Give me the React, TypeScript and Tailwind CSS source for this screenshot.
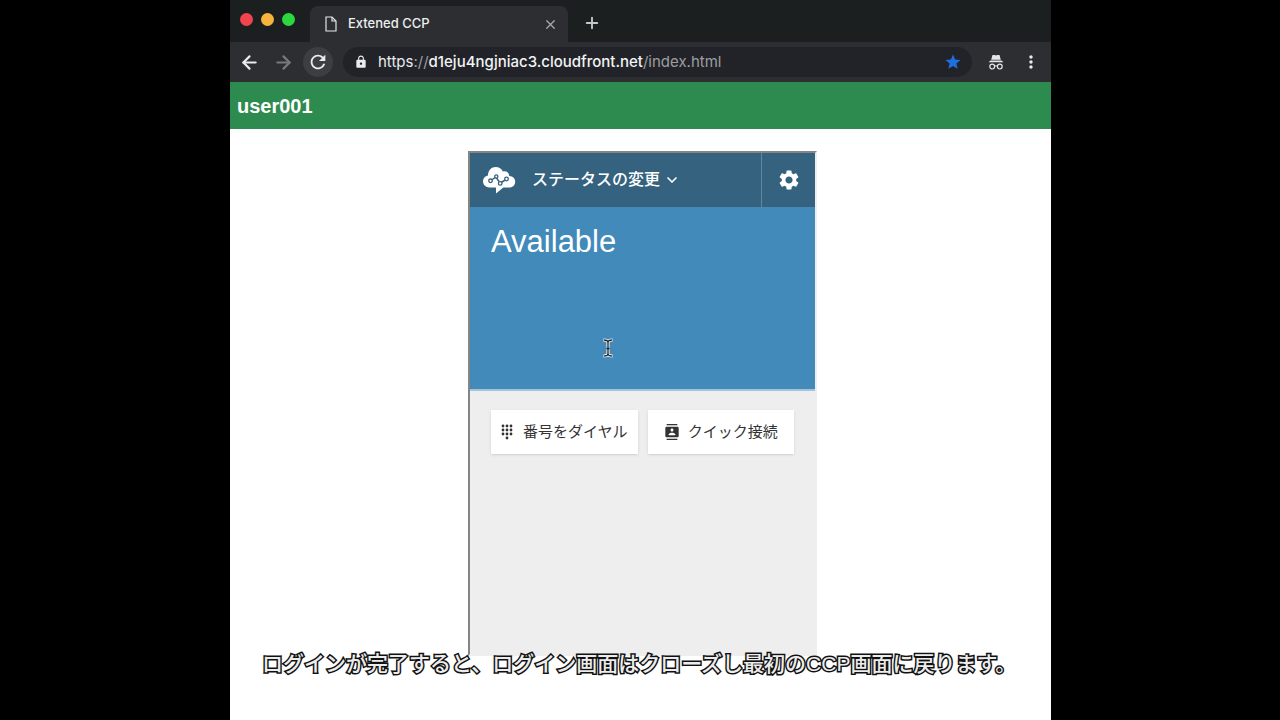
import { ArrowLeft, ArrowRight, ChevronDown, Plus, X } from 'lucide-react'
import { MdContacts, MdLock, MdMoreVert, MdRefresh, MdSettings, MdStar } from 'react-icons/md'

const windowControls = [
  { label: 'Close window', color: 'bg-[#f2444f]' },
  { label: 'Minimize window', color: 'bg-[#f6b43c]' },
  { label: 'Zoom window', color: 'bg-[#2bd840]' },
]

// three full rows of keys, then the single zero key
const dialpadDots = [
  [2, 2], [6, 2], [10, 2],
  [2, 6], [6, 6], [10, 6],
  [2, 10], [6, 10], [10, 10],
  [6, 14],
]

function FileIcon() {
  return (
    <svg viewBox="0 0 12 16" className="h-4 w-3" fill="none" stroke="#e3e5e7" strokeWidth="1.2">
      <path d="M1 1h6l4 4v10H1z" />
      <path d="M7 1v4h4" />
    </svg>
  )
}

function IncognitoIcon() {
  return (
    <svg viewBox="0 0 16 16" className="h-4 w-4" fill="#e3e5e7">
      <path d="M4.500 1h2.200l1.300.5L9.300 1h2.200l1.300 4.800H3.200zM2.500 6.500h11l2 1.800H.5z" />
      <g fill="none" stroke="#e3e5e7" strokeWidth="1.200">
        <circle cx="4.200" cy="12.600" r="2.400" />
        <circle cx="11.800" cy="12.600" r="2.400" />
        <path d="M6.600 12.200q1.400-.9 2.800 0" />
      </g>
    </svg>
  )
}

function ConnectLogo() {
  return (
    <svg viewBox="0 0 34 28" className="h-7 w-[34px]">
      <path
        fill="#fff"
        d="M7.500 21.500C3.500 21.500 1 18.600 1 15.300c0-3.100 2-5.400 4.900-5.900C6.200 4.500 9.300 1 13.700 1c3.300 0 5.900 1.700 7.100 4.500 3.500-.9 6.300 1.300 6.500 4.600 3.600.3 5.900 2.600 5.900 5.600 0 3.300-2.400 5.800-5.900 5.800h-6L14 27.500v-6z"
      />
      <path fill="none" stroke="#35627f" strokeWidth="1.500" d="M9 14.500l4.800-3.500 4.500 6.200 5.600-3.700" />
      <g fill="#fff" stroke="#35627f" strokeWidth="1.300">
        <circle cx="8.500" cy="14.800" r="1.800" />
        <circle cx="14.300" cy="10.500" r="1.600" />
        <circle cx="18.200" cy="17.400" r="1.800" />
        <circle cx="24.500" cy="13" r="1.800" />
      </g>
    </svg>
  )
}

function DialpadIcon() {
  return (
    <svg viewBox="0 0 12 16" className="h-4 w-3" fill="#333">
      {dialpadDots.map(([x, y]) => (
        <circle key={`${x}-${y}`} cx={x} cy={y} r="1.400" />
      ))}
    </svg>
  )
}

function TextCursor() {
  return (
    <svg viewBox="0 0 12 20" className="absolute left-[132px] top-[131px] h-5 w-3" fill="none">
      <path stroke="#fff" strokeWidth="3" d="M1.500 2Q6 2 6 4.500 6 2 10.500 2M6 4v12M1.500 18Q6 18 6 15.500 6 18 10.500 18" />
      <path stroke="#222" strokeWidth="1.300" d="M2 2Q6 2 6 4.500 6 2 10 2M6 4v12M2 18Q6 18 6 15.500 6 18 10 18M4.500 10.500h3" />
    </svg>
  )
}

function TabStrip() {
  return (
    <div className="flex h-[42px] items-end bg-[#1c1f1f]">
      <div className="flex w-20 shrink-0 gap-2 self-start pl-[10px] pt-[13px]">
        {windowControls.map((control) => (
          <button key={control.label} aria-label={control.label} className={`h-[13px] w-[13px] rounded-full ${control.color}`} />
        ))}
      </div>
      <div className="flex h-9 w-[258px] items-center rounded-t-lg bg-[#2d2e32] pl-[15px] pr-[10px]">
        <FileIcon />
        <span className="ml-[11px] flex-1 text-[13px] font-medium text-[#eceef0]">Extened CCP</span>
        <button aria-label="Close tab" className="text-[#a9abae]">
          <X size={15} />
        </button>
      </div>
      <button aria-label="New tab" className="mb-[10px] ml-[15px] text-[#c5c8ca]">
        <Plus size={18} strokeWidth={2.5} />
      </button>
    </div>
  )
}

function Toolbar() {
  return (
    <div className="flex h-10 items-center bg-[#2d2e32] pl-[9px] pr-[10px] text-[#e9ebed]">
      <button aria-label="Back">
        <ArrowLeft size={21} strokeWidth={2.5} />
      </button>
      <button aria-label="Forward" className="ml-[13px] text-[#77797c]">
        <ArrowRight size={21} strokeWidth={2.5} />
      </button>
      <button aria-label="Reload" className="ml-[9px] flex h-[30px] w-[30px] items-center justify-center rounded-full bg-[#3d3e42]">
        <MdRefresh size={22} />
      </button>
      <div className="ml-[10px] flex h-[30px] flex-1 items-center rounded-full bg-[#222328] pl-[11px] pr-[10px]">
        <MdLock size={14} />
        <div className="ml-[10px] flex-1 whitespace-nowrap text-[15px] text-[#9c9ea2]">
          <span className="text-[#e9ebed]">https</span>://
          <span className="font-medium text-[#f1f3f4]">d1eju4ngjniac3.cloudfront.net</span>/index.html
        </div>
        <button aria-label="Edit bookmark" className="text-[#1f6fe0]">
          <MdStar size={18} />
        </button>
      </div>
      <div className="ml-4">
        <IncognitoIcon />
      </div>
      <button aria-label="Browser menu" className="ml-[17px]">
        <MdMoreVert size={20} />
      </button>
    </div>
  )
}

function ControlPanel() {
  return (
    <section
      aria-label="Contact control panel"
      className="mx-auto h-[505px] w-[349px] border-2 border-b-[#eee] border-l-[#858585] border-r-[#eee] border-t-[#858585] bg-[#eee]"
    >
      <header className="flex h-[54px] bg-[#35627f] text-white">
        <button className="flex flex-1 items-center pl-3">
          <ConnectLogo />
          <span className="ml-4 text-base font-medium">ステータスの変更</span>
          <ChevronDown size={16} strokeWidth={2.5} className="ml-1" />
        </button>
        <button aria-label="Settings" className="flex w-[54px] items-center justify-center border-l border-[#5f87a0]">
          <MdSettings size={24} />
        </button>
      </header>
      <div className="relative h-[184px] border-b-2 border-[#a3c4da] bg-[#418aba] px-[21px] pt-[17px]">
        <h2 className="text-[31px] leading-9 text-white">Available</h2>
        <TextCursor />
      </div>
      <div className="flex gap-[10px] px-[21px] pt-[19px] text-[#333]">
        <button className="flex h-11 flex-1 items-center justify-center gap-[10px] whitespace-nowrap bg-white text-[15px] shadow">
          <DialpadIcon />
          番号をダイヤル
        </button>
        <button className="flex h-11 flex-1 items-center justify-center gap-2 whitespace-nowrap bg-white text-[15px] shadow">
          <MdContacts size={16} />
          クイック接続
        </button>
      </div>
    </section>
  )
}

export default function App() {
  return (
    <div className="min-h-screen bg-black pl-[230px] pr-[229px] font-['Liberation_Sans','Noto_Sans_CJK_JP',sans-serif]">
      <div className="relative min-h-screen bg-white">
        <div className="font-[Inter,sans-serif]">
          <TabStrip />
          <Toolbar />
        </div>
        <h1 className="flex h-[47px] items-center bg-[#2e8b50] px-[7px] text-xl font-bold text-white">user001</h1>
        <main className="pl-1 pt-[22px]">
          <ControlPanel />
        </main>
        <p className="absolute inset-x-0 bottom-10 whitespace-nowrap pl-8 text-[21px] font-medium leading-8 text-[#ececec] [-webkit-text-stroke:3px_#111] [paint-order:stroke_fill]">
          ログインが完了すると、ログイン画面はクローズし最初のCCP画面に戻ります。
        </p>
      </div>
    </div>
  )
}
